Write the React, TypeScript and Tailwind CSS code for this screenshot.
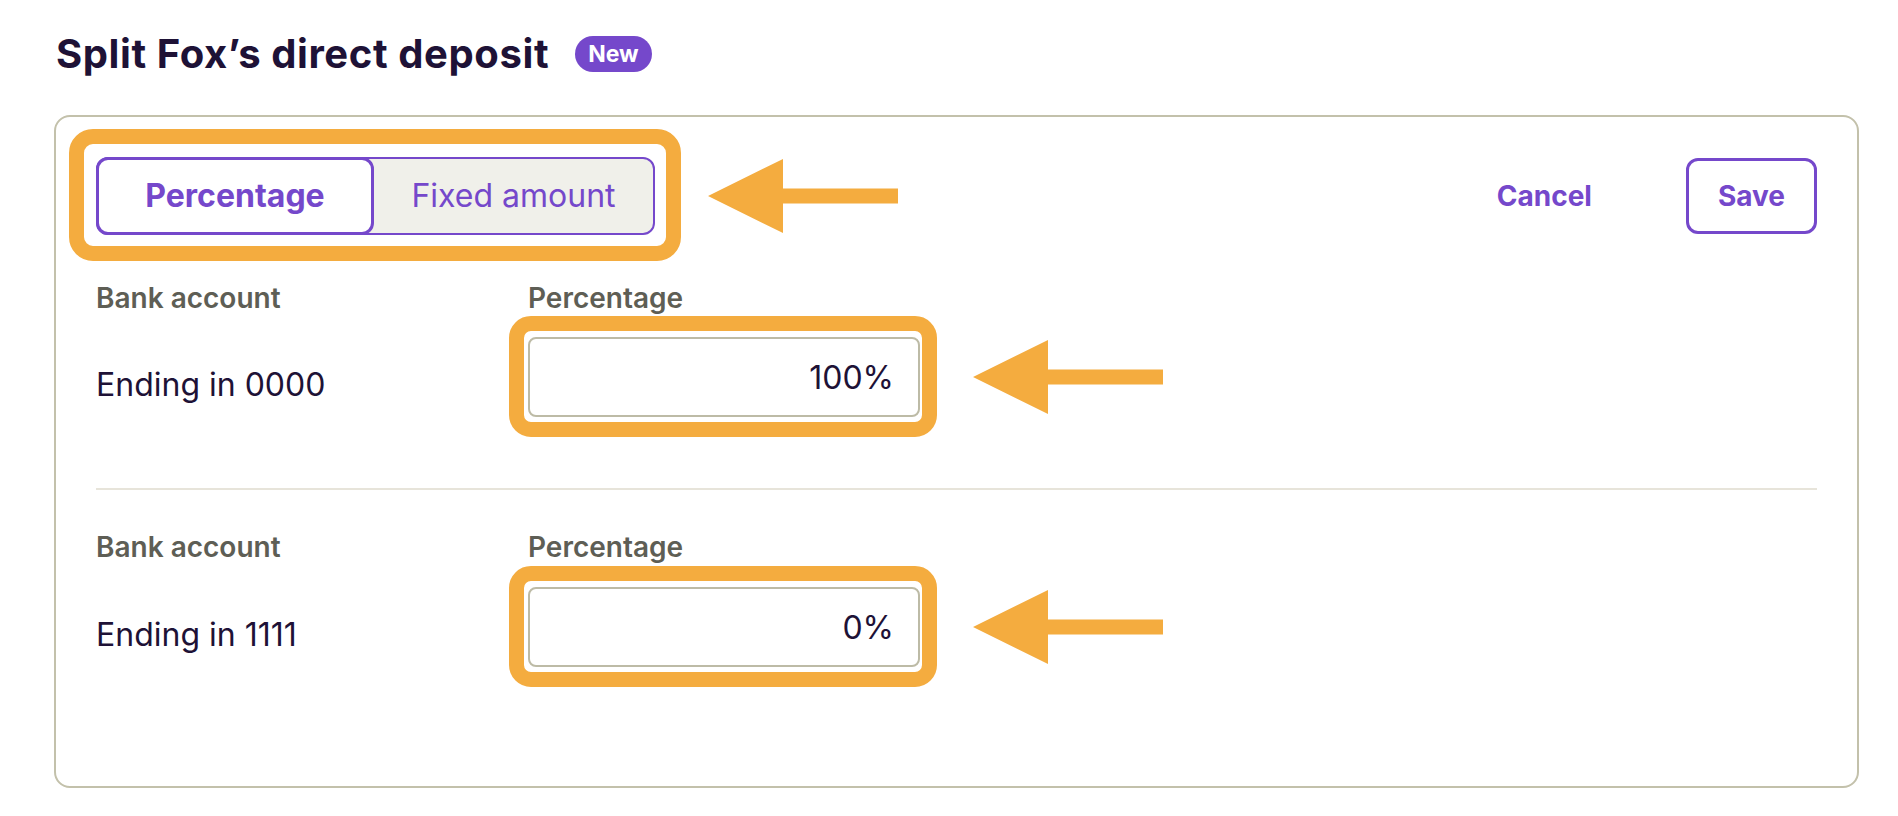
import React from "react";

const Arrow = () => (
  <svg width="190" height="76" viewBox="0 0 190 76" className="shrink-0 block">
    <path d="M0 38 L75 1 L75 30.5 L190 30.5 L190 45.5 L75 45.5 L75 75 Z" fill="#f4ac3f" />
  </svg>
);

function Row({ ending, value, first }: { ending: string; value: string; first?: boolean }) {
  return (
    <div className={`grid grid-cols-[432px_1fr] ${first ? "mt-[45px]" : "mt-[39px]"}`}>
      <div className="flex flex-col">
        <div className="text-[28px] leading-[36px] font-semibold text-[#5e5e55] h-[36px]">Bank account</div>
        <div className={`${first ? "mt-[49px]" : "mt-[50px]"} text-[32px] leading-[40px] text-[#1e1236]`}>{ending}</div>
      </div>
      <div className="flex flex-col">
        <div className="text-[28px] leading-[36px] font-semibold text-[#5e5e55] h-[36px]">Percentage</div>
        <div className={`${first ? "mt-[21px]" : "mt-[22px]"} flex items-center`}>
          <div className="relative">
            <div className="absolute left-[-19px] right-[-17px] top-[-21px] bottom-[-20px] border-[15px] border-[#f4ac3f] rounded-[22px] pointer-events-none" />
            <input
              readOnly
              value={value}
              className="relative block w-[392px] h-[80px] border-2 border-[#bdbba6] rounded-[8px] bg-white pr-[24px] text-right text-[32px] text-[#1e1236] outline-none [font-family:Inter,sans-serif]"
            />
          </div>
          <div className="ml-[53px]">
            <Arrow />
          </div>
        </div>
      </div>
    </div>
  );
}

export default function App() {
  return (
    <div className="min-h-[816px] bg-white [font-family:Inter,sans-serif] pl-[54px] pt-[30px]">
      <div className="flex items-center h-[48px]">
        <h1 className="ml-[2px] text-[40px] leading-[48px] font-bold text-[#1e1236] tracking-[0.6px]">
          Split Fox’s direct deposit
        </h1>
        <span className="ml-[26px] h-[36px] px-[13px] rounded-full bg-[#7548cb] text-white text-[23px] font-bold flex items-center">
          New
        </span>
      </div>

      <div className="mt-[37px] w-[1805px] border-2 border-[#c3c1ab] rounded-[16px] px-[40px] pt-[40px] pb-[119px]">
        <div className="flex items-center h-[78px]">
          <div className="relative">
            <div className="absolute left-[-27px] top-[-28px] right-[-26px] bottom-[-26px] border-[15px] border-[#f4ac3f] rounded-[24px] pointer-events-none" />
            <div className="relative flex h-[78px] w-[559px] border-2 border-[#7548cb] rounded-[12px] bg-[#f0f0ea]">
              <button className="-ml-[2px] -my-[2px] h-[78px] w-[278px] border-[3px] border-[#7548cb] rounded-[12px] bg-white text-[32px] font-bold text-[#7548cb] flex items-center justify-center">
                Percentage
              </button>
              <button className="flex-1 text-[32px] font-normal text-[#7548cb] flex items-center justify-center">
                Fixed amount
              </button>
            </div>
          </div>
          <div className="ml-[53px]">
            <Arrow />
          </div>
          <button className="ml-auto text-[28px] font-bold text-[#7548cb]">Cancel</button>
          <button className="ml-[94px] h-[76px] px-[29px] border-[3px] border-[#7548cb] rounded-[12px] text-[28px] font-bold text-[#7548cb]">
            Save
          </button>
        </div>

        <Row ending="Ending in 0000" value="100%" first />

        <div className="mt-[71px] h-[2px] bg-[#e7e4da]" />

        <Row ending="Ending in 1111" value="0%" />
      </div>
    </div>
  );
}
